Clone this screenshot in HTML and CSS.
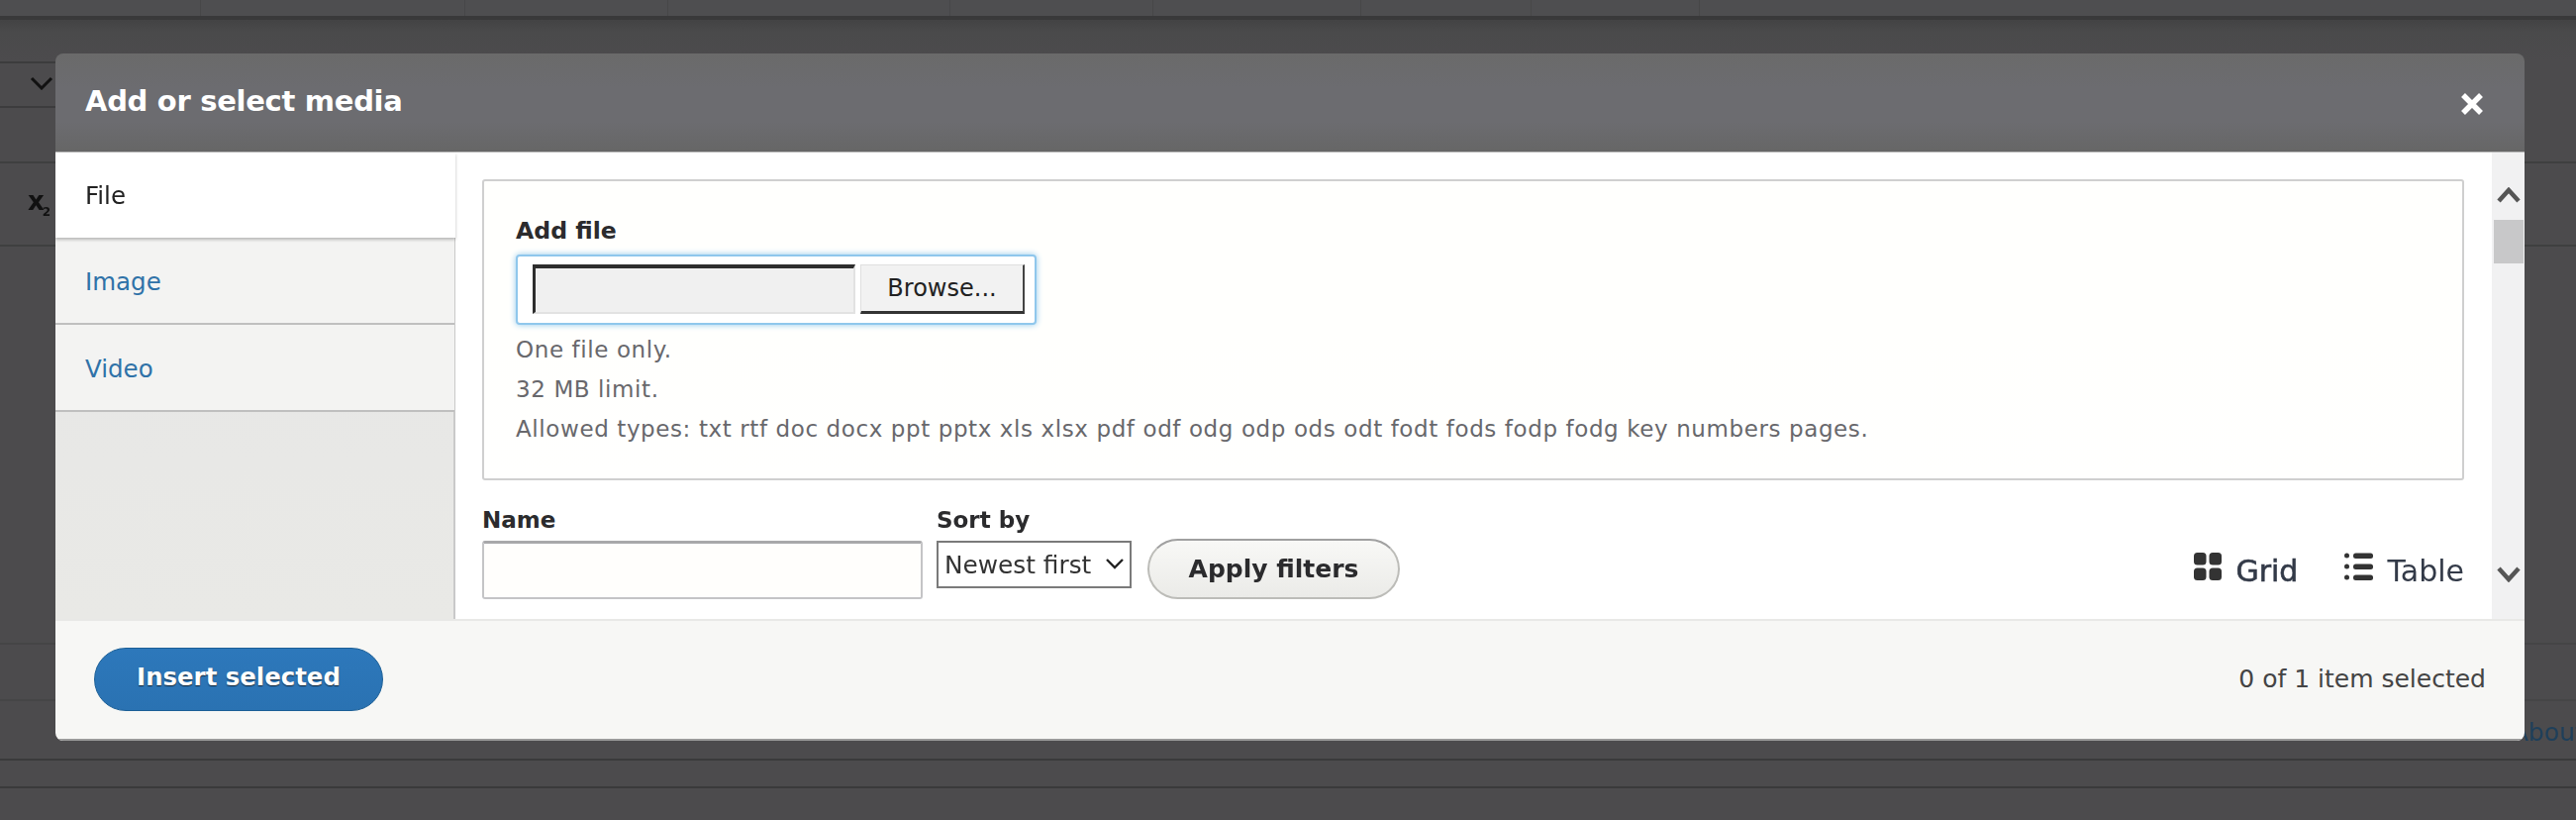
FILE: index.html
```html
<!DOCTYPE html>
<html lang="en">
<head>
<meta charset="utf-8">
<title>Add or select media</title>
<link rel="stylesheet" href="styles.css">
</head>
<body>
<div class="backdrop">
  <div class="bg-toolbar">
    <span class="bg-cell c1"></span><span class="bg-cell c2"></span><span class="bg-cell c3"></span><span class="bg-cell c4"></span><span class="bg-cell c5"></span><span class="bg-cell c6"></span><span class="bg-cell c7"></span><span class="bg-cell c8"></span>
  </div>
  <div class="bg-gap"></div>
  <div class="bg-select">
    <svg class="bg-chevron" viewBox="0 0 24 14" aria-hidden="true"><path d="M2 2l10 10L22 2" fill="none" stroke="#111" stroke-width="3"/></svg>
  </div>
  <div class="bg-row r1"></div>
  <div class="bg-row r2"><span class="bg-sub">x<sub>2</sub></span></div>
  <div class="bg-row r3"></div>
  <div class="bg-row r4"></div>
  <div class="bg-row r5"><span class="bg-link">About</span></div>
  <div class="bg-row r6"></div>
</div>

<section class="modal">
  <header class="modal-title">
    <h1>Add or select media</h1>
    <svg class="close" viewBox="0 0 24 24" aria-hidden="true"><path d="M3 3l18 18M21 3L3 21" fill="none" stroke="#fff" stroke-width="5.5"/></svg>
  </header>
  <div class="modal-body">
    <nav class="tabs">
      <a class="tab active">File</a>
      <a class="tab">Image</a>
      <a class="tab">Video</a>
    </nav>
    <main class="content">
      <div class="panel">
        <label class="label add-label">Add file</label>
        <div class="file-box">
          <span class="file-name"></span>
          <button class="browse" type="button">Browse...</button>
        </div>
        <p class="help">One file only.</p>
        <p class="help">32 MB limit.</p>
        <p class="help">Allowed types: txt rtf doc docx ppt pptx xls xlsx pdf odf odg odp ods odt fodt fods fodp fodg key numbers pages.</p>
      </div>
      <div class="filters">
        <div class="field name-field">
          <label class="label">Name</label>
          <input class="name-input" type="text">
        </div>
        <div class="field sort-field">
          <label class="label">Sort by</label>
          <div class="select-wrap">
            <select class="sort"><option>Newest first</option></select>
            <svg class="select-arrow" viewBox="0 0 20 12" aria-hidden="true"><path d="M2 2l8 8 8-8" fill="none" stroke="#222" stroke-width="2.4"/></svg>
          </div>
        </div>
        <button class="apply" type="button">Apply filters</button>
        <div class="views">
          <span class="view grid-view">
            <svg class="view-icon" viewBox="0 0 28 28" aria-hidden="true"><rect x="0" y="0" width="12.5" height="12.5" rx="3.5" fill="#333"/><rect x="15.5" y="0" width="12.5" height="12.5" rx="3.5" fill="#333"/><rect x="0" y="15.5" width="12.5" height="12.5" rx="3.5" fill="#333"/><rect x="15.5" y="15.5" width="12.5" height="12.5" rx="3.5" fill="#333"/></svg>
            Grid
          </span>
          <span class="view table-view">
            <svg class="view-icon" viewBox="0 0 29 28" aria-hidden="true"><circle cx="2.5" cy="3" r="2.5" fill="#333"/><circle cx="2.5" cy="14" r="2.5" fill="#333"/><circle cx="2.5" cy="25" r="2.5" fill="#333"/><rect x="9" y="0.5" width="20" height="5.5" rx="2.5" fill="#333"/><rect x="9" y="11.5" width="20" height="5.5" rx="2.5" fill="#333"/><rect x="9" y="22.5" width="20" height="5.5" rx="2.5" fill="#333"/></svg>
            Table
          </span>
        </div>
      </div>
    </main>
    <aside class="scrollbar">
      <svg class="scroll-arrow up" viewBox="0 0 24 16" aria-hidden="true"><path d="M2 14L12 3l10 11" fill="none" stroke="#555" stroke-width="4.5"/></svg>
      <span class="thumb"></span>
      <span class="track"></span>
      <svg class="scroll-arrow down" viewBox="0 0 24 16" aria-hidden="true"><path d="M2 2l10 11L22 2" fill="none" stroke="#555" stroke-width="4.5"/></svg>
    </aside>
  </div>
  <footer class="modal-footer">
    <button class="insert" type="button">Insert selected</button>
    <span class="count">0 of 1 item selected</span>
  </footer>
</section>
</body>
</html>
```

FILE: styles.css
```css
* { box-sizing: border-box; }
html, body { margin: 0; height: 828px; overflow: hidden; }
body {
  position: relative;
  background: #4c4b4d;
  font-family: "DejaVu Sans", "Liberation Sans", sans-serif;
}

/* Dimmed page behind the dialog */
.backdrop { height: 828px; filter: blur(0.6px); }
.bg-toolbar {
  display: flex;
  height: 20px;
  background: #4e4e50;
  border-bottom: 4px solid #39393a;
}
.bg-cell { border-right: 1px solid #474748; }
.c1 { width: 203px; } .c2 { width: 267px; } .c3 { width: 205px; } .c4 { width: 285px; }
.c5 { width: 205px; } .c6 { width: 210px; } .c7 { width: 172px; } .c8 { width: 170px; }
.bg-gap { height: 42px; background: linear-gradient(#434344, #4a4a4b 30%, #4c4b4d); }
.bg-select {
  width: 56px;
  height: 47px;
  border-top: 2px solid #3c3c3d;
  border-bottom: 2px solid #3c3c3d;
  display: flex;
  align-items: center;
  justify-content: flex-end;
  padding: 0 2px 3px 0;
}
.bg-chevron { width: 24px; height: 14px; }
.bg-row { border-bottom: 2px solid #3f3f40; }
.r1 { height: 56px; }
.r2 { height: 84px; display: flex; align-items: center; padding: 0 0 2px 28px; }
.r3 { height: 402px; border-bottom-color: #454546; }
.r4 { height: 57px; border-bottom-color: #454546; }
.r5 { height: 60px; display: flex; justify-content: flex-end; align-items: center; border-bottom-color: #3a3a3b; padding-top: 4px; }
.r6 { height: 28px; border-bottom-color: #3a3a3b; }
.bg-sub { font-weight: 700; font-size: 26px; color: #111; line-height: 1; }
.bg-sub sub { font-size: 12px; margin-left: -2px; }
.bg-link { font-size: 25px; color: #1e3f5a; width: 52px; text-indent: -13px; white-space: nowrap; overflow: hidden; }

/* Dialog */
.modal {
  position: absolute;
  left: 56px;
  top: 54px;
  width: 2494px;
  height: 694px;
  display: flex;
  flex-direction: column;
  border-radius: 8px;
  overflow: hidden;
  filter: blur(0.6px);
}
.modal-title {
  height: 100px;
  flex: none;
  display: flex;
  align-items: center;
  justify-content: space-between;
  padding: 0 41px 3px 30px;
  background: linear-gradient(#6a6a6a, #6c6c70 35%, #6c6c70 70%, #666);
  border-bottom: 1px solid #b5b5b5;
}
.modal-title h1 {
  margin: 0;
  color: #fff;
  font-size: 29px;
  font-weight: 700;
  letter-spacing: -0.3px;
}
.close { width: 24px; height: 24px; margin-top: 5px; }

.modal-body { flex: 1; display: flex; min-height: 0; background: #fff; }

.tabs {
  width: 404px;
  flex: none;
  display: flex;
  flex-direction: column;
  background: linear-gradient(#e6e6e6, #e9e9e6);
  border-right: 2px solid #c9c9c9;
}
.tab {
  height: 88px;
  padding: 2px 0 0 30px;
  display: flex;
  align-items: center;
  font-size: 24.5px;
  color: #2f72a8;
  background: #f3f3f2;
  border-bottom: 2px solid #bfbfbf;
  margin-right: -1px;
}
.tab.active {
  height: 86px;
  color: #222;
  background: #fff;
  margin-right: -2px;
  position: relative;
  padding: 0 0 0 30px;
  border-bottom: none;
  box-shadow: 0 2px 3px rgba(0,0,0,.25);
}

.content {
  flex: 1;
  min-width: 0;
  padding: 27px 28px 0 27px;
  background: #fff;
}
.panel {
  height: 304px;
  padding: 36px 32px 0;
  background: linear-gradient(#fffffd, #fffffd 50%, #fffffe);
  border: 2px solid #cfcfcf;
  border-radius: 3px;
}
.label {
  display: block;
  font-size: 23px;
  font-weight: 700;
  color: #2b2b2d;
  line-height: 28px;
}
.add-label { margin-bottom: 10px; font-size: 23.6px; }
.file-box {
  width: 526px;
  height: 71px;
  padding: 8px 10px 9px 15px;
  display: flex;
  gap: 5px;
  background: #fff;
  border: 2px solid #8fc7ec;
  border-radius: 4px;
  box-shadow: 0 0 6px #8fc7ec;
}
.file-name {
  width: 326px;
  background: #f0f0f0;
  border-top: 4px solid #2e2e2e;
  border-left: 3px solid #2e2e2e;
  border-bottom: 2px solid #e2e2e2;
  border-right: 2px solid #e2e2e2;
}
.browse {
  flex: 1;
  padding: 0;
  font: 400 24px "DejaVu Sans", sans-serif;
  color: #222;
  background: #f2f2f2;
  border: none;
  border-top: 1px solid #e0e0e0;
  border-left: 1px solid #e0e0e0;
  border-right: 2px solid #444;
  border-bottom: 3px solid #333;
}
.help {
  margin: 0;
  font-size: 23px;
  letter-spacing: 0.6px;
  line-height: 40px;
  color: #68686c;
}
.file-box + .help { margin-top: 5px; }

.filters {
  display: flex;
  align-items: flex-end;
  margin-top: 25px;
  height: 95px;
}
.field { display: flex; flex-direction: column; align-self: stretch; }
.filters .label { line-height: 30px; margin-bottom: 6px; }
.name-field { width: 445px; margin-right: 14px; }
.name-input {
  height: 59px;
  width: 100%;
  background: #fffefc;
  border: 2px solid #c4c4c6;
  border-top: 3px solid #a8a8aa;
  border-radius: 3px;
}
.sort-field { width: 197px; margin-right: 16px; }
.select-wrap { position: relative; height: 48px; }
.sort {
  appearance: none;
  width: 100%;
  height: 48px;
  padding: 0 0 0 6px;
  font: 400 24.8px "DejaVu Sans", sans-serif;
  color: #333;
  background: #fff;
  border: 2px solid #7a7a7a;
  border-radius: 0;
}
.select-arrow { position: absolute; right: 7px; top: 17px; width: 20px; height: 12px; }
.apply {
  width: 255px;
  height: 61px;
  padding: 0;
  font: 700 25px "DejaVu Sans", sans-serif;
  color: #2b2b2d;
  background: linear-gradient(#f8f8f6, #ebebe8);
  border: 2px solid #bcbcb8;
  border-top-color: #a0a0a0;
  border-radius: 31px;
}
.views {
  margin-left: auto;
  display: flex;
  gap: 47px;
  align-items: flex-end;
  margin-bottom: 13px;
  font-size: 30px;
  color: #333a48;
}
.view { display: flex; align-items: flex-end; gap: 14px; line-height: 30px; }
.view-icon { width: 28px; height: 28px; margin-bottom: 6px; }
.grid-view { -webkit-text-stroke: 0.6px #333a48; }
.table-view .view-icon { width: 29px; }

.scrollbar {
  width: 33px;
  flex: none;
  display: flex;
  flex-direction: column;
  align-items: center;
  background: #f1f1f2;
  padding-top: 35px;
}
.scroll-arrow { width: 24px; height: 16px; flex: none; }
.thumb { width: 30px; height: 44px; flex: none; margin-top: 17px; background: #c8c8c9; }
.track { flex: 1; }
.scroll-arrow.down { margin-bottom: 37px; }

.modal-footer {
  height: 123px;
  flex: none;
  display: flex;
  align-items: center;
  justify-content: space-between;
  padding: 0 39px 2px 39px;
  background: #f7f7f5;
  border-top: 2px solid #e8e8e6;
  border-bottom: 2px solid #9a9a9a;
}
.insert {
  width: 292px;
  height: 64px;
  padding: 0 0 4px;
  font: 700 24.4px "DejaVu Sans", sans-serif;
  color: #fff;
  background: linear-gradient(#2d78bb, #2a72b2);
  border: 1px solid #1c5f96;
  border-radius: 32px;
  text-shadow: 0 1px 1px #123;
}
.count { font-size: 25px; color: #444; }
```
